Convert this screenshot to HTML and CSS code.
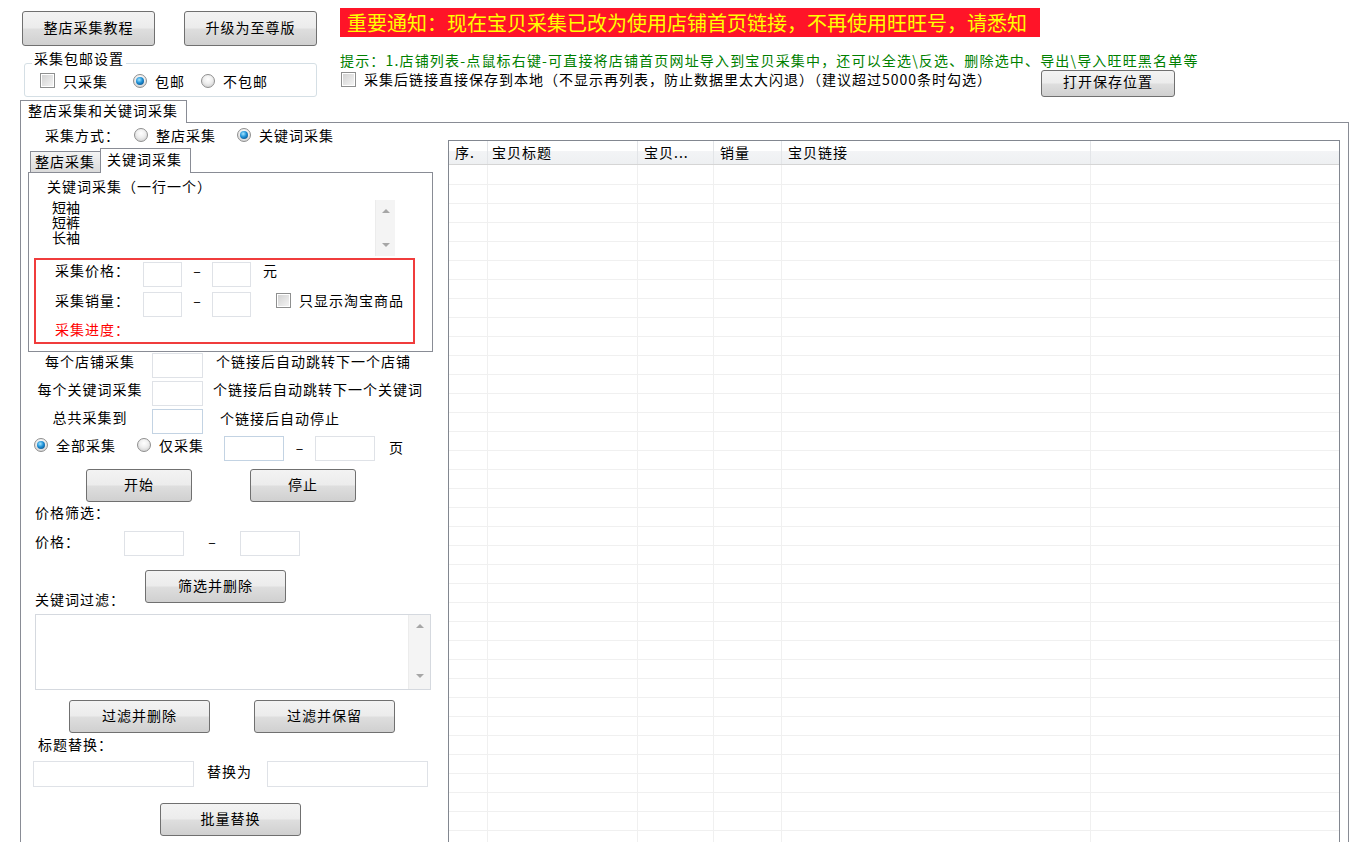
FILE: index.html
```html
<!DOCTYPE html>
<html lang="zh-CN">
<head>
  <meta charset="UTF-8" />
  <title>宝贝采集</title>
  <link rel="stylesheet" href="styles.css">
</head>
<body>
  <div class="top">
    <div class="top-left">
      <div class="btn-row">
        <button class="btn btn-top">整店采集教程</button>
        <button class="btn btn-top">升级为至尊版</button>
      </div>
      <div class="group">
        <span class="group-title">采集包邮设置</span>
        <label class="opt w93"><span class="check"></span>只采集</label>
        <label class="opt w68"><span class="radio on"></span>包邮</label>
        <label class="opt"><span class="radio"></span>不包邮</label>
      </div>
    </div>
    <div class="top-right">
      <div class="notice">重要通知：现在宝贝采集已改为使用店铺首页链接，不再使用旺旺号，请悉知</div>
      <div class="hint">提示：1.店铺列表-点鼠标右键-可直接将店铺首页网址导入到宝贝采集中，还可以全选\反选、删除选中、导出\导入旺旺黑名单等</div>
      <div class="save-row">
        <label class="opt save-opt"><span class="check"></span>采集后链接直接保存到本地（不显示再列表，防止数据里太大闪退）（建议超过5000条时勾选）</label>
        <button class="btn btn-save">打开保存位置</button>
      </div>
    </div>
  </div>

  <div class="tabs">
    <div class="tab-strip"><div class="tab">整店采集和关键词采集</div></div>
    <div class="tab-panel">
      <div class="left">
        <div class="mode-row">
          <span class="mode-label">采集方式：</span>
          <label class="opt w103"><span class="radio"></span>整店采集</label>
          <label class="opt"><span class="radio on"></span>关键词采集</label>
        </div>

        <div class="sub-strip">
          <div class="sub-tab">整店采集</div>
          <div class="sub-tab active">关键词采集</div>
        </div>
        <div class="sub-panel">
          <div class="kw-title">关键词采集（一行一个）</div>
          <div class="kw-box">
            <div class="kw-text">短袖<br>短裤<br>长袖</div>
            <div class="vscroll"><span class="arrow up"></span><span class="arrow down"></span></div>
          </div>
          <div class="redbox">
            <div class="rb-row">
              <span class="rb-label">采集价格：</span>
              <input class="field f39"><span class="dash">–</span><input class="field f39">
              <span class="unit">元</span>
            </div>
            <div class="rb-row">
              <span class="rb-label">采集销量：</span>
              <input class="field f39"><span class="dash">–</span><input class="field f39">
              <label class="opt taobao"><span class="check"></span>只显示淘宝商品</label>
            </div>
            <div class="progress">采集进度：</div>
          </div>
        </div>

        <div class="cnt-row first">
          <span class="cnt-label">每个店铺采集</span>
          <input class="field f51"><span class="cnt-text m13">个链接后自动跳转下一个店铺</span>
        </div>
        <div class="cnt-row">
          <span class="cnt-label">每个关键词采集</span>
          <input class="field f51"><span class="cnt-text m10">个链接后自动跳转下一个关键词</span>
        </div>
        <div class="cnt-row">
          <span class="cnt-label">总共采集到</span>
          <input class="field f51 blue"><span class="cnt-text m17">个链接后自动停止</span>
        </div>
        <div class="page-row">
          <label class="opt w103"><span class="radio on"></span>全部采集</label>
          <label class="opt w87"><span class="radio"></span>仅采集</label>
          <input class="field f60 blue"><span class="dash d31">–</span><input class="field f60">
          <span class="unit page">页</span>
        </div>
        <div class="run-row">
          <button class="btn btn-run">开始</button>
          <button class="btn btn-run">停止</button>
        </div>

        <div class="caption c35">价格筛选：</div>
        <div class="price-row">
          <span class="price-label">价格：</span>
          <input class="field f60"><span class="dash d56">–</span><input class="field f60">
        </div>
        <div class="filter-row">
          <span class="filter-label">关键词过滤：</span>
          <button class="btn btn-wide">筛选并删除</button>
        </div>
        <div class="memo">
          <div class="memo-text"></div>
          <div class="vscroll wide"><span class="arrow up"></span><span class="arrow down"></span></div>
        </div>
        <div class="keep-row">
          <button class="btn btn-wide">过滤并删除</button>
          <button class="btn btn-wide">过滤并保留</button>
        </div>

        <div class="caption c38">标题替换：</div>
        <div class="repl-row">
          <input class="field f161"><span class="repl-label">替换为</span><input class="field f161">
        </div>
        <button class="btn btn-wide btn-batch">批量替换</button>
      </div>

      <div class="listview">
        <div class="lv-head">
          <div class="col c1">序.</div>
          <div class="col c2">宝贝标题</div>
          <div class="col c3">宝贝...</div>
          <div class="col c4">销量</div>
          <div class="col c5">宝贝链接</div>
          <div class="col c6"></div>
        </div>
        <div class="lv-body">
          <div class="col c1"></div>
          <div class="col c2"></div>
          <div class="col c3"></div>
          <div class="col c4"></div>
          <div class="col c5"></div>
          <div class="col c6"></div>
        </div>
      </div>
    </div>
  </div>
</body>
</html>
```

FILE: styles.css
```css
* { box-sizing: border-box; }
body { margin: 0; width: 1357px; height: 842px; overflow: hidden; background: #fff; color: #000; font-family: "Noto Sans CJK SC", "Liberation Sans", sans-serif; font-size: 14px; letter-spacing: 1px; line-height: 16px; }

/* common controls */
.btn { display: block; padding: 0 0 4px; font: inherit; letter-spacing: inherit; color: #000; border: 1px solid #707070; border-radius: 3px; background: linear-gradient(#f3f3f3 0, #ececec 48%, #dedede 52%, #d0d0d0 100%); cursor: pointer; }
.field { display: block; height: 25px; padding: 0 3px; margin: 0; border: 1px solid #dfe2e7; background: #fff; font: inherit; outline: none; }
.field.blue { border-color: #c3d3e3; }
.f39 { width: 39px; }
.f51 { width: 51px; }
.f60 { width: 60px; }
.f161 { width: 161px; height: 26px; }
.opt { display: flex; align-items: center; gap: 8px; white-space: nowrap; }
.w68 { width: 68px; }
.w87 { width: 87px; }
.w93 { width: 93px; }
.w103 { width: 103px; }
.check { flex: none; width: 15px; height: 15px; border: 1px solid #8e8f8f; background: linear-gradient(135deg, #cfcfcf, #f6f6f6); box-shadow: inset 0 0 0 1px #fff; }
.radio { flex: none; width: 14px; height: 14px; border-radius: 50%; border: 1px solid #8f8f8f; background: radial-gradient(circle at 50% 35%, #fff 0, #eee 45%, #c6c6c6 100%); display: flex; align-items: center; justify-content: center; }
.radio.on::after { content: ""; width: 8px; height: 8px; border-radius: 50%; background: radial-gradient(circle at 40% 35%, #a4e6ff 0, #1c8fd6 45%, #0a3c6e 100%); }
.dash { width: 30px; text-align: center; letter-spacing: 0; }
.d31 { width: 31px; }
.d56 { width: 56px; }
.vscroll { flex: none; width: 20px; background: #f4f4f4; border-left: 1px solid #ececec; display: flex; flex-direction: column; justify-content: space-between; align-items: center; padding: 9px 0; }
.vscroll.wide { width: 22px; padding: 9px 0 11px; }
.arrow { width: 0; height: 0; border-left: 4px solid transparent; border-right: 4px solid transparent; }
.arrow.up { border-bottom: 4px solid #a6a6a6; }
.arrow.down { border-top: 4px solid #a6a6a6; }

/* top area */
.top { display: flex; height: 97px; }
.top-left { width: 340px; padding: 11px 0 0 22px; }
.btn-row { display: flex; gap: 29px; }
.btn-top { width: 133px; height: 35px; }
.group { position: relative; margin: 17px 0 0 2px; width: 293px; height: 34px; padding: 1px 0 0 15px; border: 1px solid #d5dfe5; border-radius: 3px; display: flex; align-items: center; }
.group-title { position: absolute; left: 7px; top: -14px; padding: 0 2px; background: #fff; }
.top-right { width: 835px; padding-top: 8px; }
.notice { width: 700px; height: 29px; padding-left: 7px; background: #ff1428; color: #ffff00; font-size: 20px; line-height: 29px; letter-spacing: 0; white-space: nowrap; }
.hint { margin-top: 15px; color: #008000; letter-spacing: 1.17px; white-space: nowrap; }
.save-row { display: flex; align-items: center; height: 26px; margin-top: 2px; padding-left: 1px; }
.save-opt { align-self: flex-start; line-height: 19px; }
.btn-save { margin-left: auto; width: 134px; height: 27px; }

/* outer tab */
.tabs { margin: 3px 0 0 20px; }
.tab-strip { display: flex; height: 22px; }
.tab { position: relative; z-index: 1; width: 167px; height: 23px; padding-left: 7px; border: 1px solid #898c95; border-bottom: 0; background: #fff; line-height: 18px; }
.tab-panel { display: flex; width: 1329px; height: 730px; border: 1px solid #898c95; }
.left { flex: none; width: 427px; }

.mode-row { display: flex; align-items: center; height: 18px; margin-top: 3px; padding-left: 24px; }
.mode-label { width: 89px; }

.sub-strip { display: flex; align-items: flex-end; height: 24px; margin: 4px 0 0 9px; }
.sub-tab { width: 71px; height: 21px; padding-left: 4px; border: 1px solid #898c95; border-bottom: 0; background: linear-gradient(#f4f4f4, #dadada); line-height: 19px; }
.sub-tab.active { position: relative; z-index: 1; width: 91px; height: 25px; margin: 0 0 -1px -1px; padding-left: 6px; background: #fff; line-height: 21px; }
.sub-panel { width: 405px; height: 180px; margin-left: 7px; padding: 5px 0 0 18px; border: 1px solid #898c95; }
.kw-box { display: flex; width: 348px; height: 56px; margin-top: 6px; }
.kw-text { flex: 1; padding: 0 0 0 5px; line-height: 15px; letter-spacing: 0; }
.redbox { width: 381px; height: 86px; margin: 2px 0 0 -13px; padding: 2px 0 0 19px; border: 2px solid #f03c3c; }
.rb-row { display: flex; align-items: center; height: 25px; }
.rb-row + .rb-row { margin-top: 5px; }
.rb-row > span, .rb-row > label { align-self: flex-start; line-height: 17px; }
.rb-label { width: 88px; }
.unit { margin-left: 12px; }
.taobao { margin-left: 25px; }
.progress { margin-top: 4px; color: #f00; }

.cnt-row { display: flex; align-items: center; height: 25px; margin-top: 3px; padding-left: 7px; }
.cnt-row.first { margin-top: 1px; }
.cnt-label, .cnt-text { align-self: flex-start; line-height: 17px; white-space: nowrap; }
.cnt-row .cnt-text.m17 { line-height: 19px; }
.cnt-label { width: 124px; text-align: center; }
.m10 { margin-left: 10px; }
.m13 { margin-left: 13px; }
.m17 { margin-left: 17px; }
.page-row { display: flex; align-items: center; height: 25px; margin-top: 2px; padding-left: 13px; }
.page-row > label { align-self: flex-start; line-height: 18px; }
.page-row > span { align-self: flex-start; line-height: 23px; }
.unit.page { margin-left: 14px; }
.run-row { display: flex; gap: 58px; margin-top: 8px; padding-left: 65px; }
.btn-run { width: 106px; height: 33px; }

.caption { margin-top: 2px; }
.c35 { padding-left: 14px; }
.c38 { margin-top: 3px; padding-left: 17px; }
.price-row { display: flex; align-items: center; height: 25px; margin-top: 11px; padding-left: 14px; }
.price-row > span { align-self: flex-start; line-height: 21px; }
.price-label { width: 89px; }
.filter-row { display: flex; align-items: flex-start; margin-top: 14px; padding-left: 14px; }
.filter-label { width: 110px; margin-top: 21px; }
.btn-wide { width: 141px; height: 33px; }
.memo { display: flex; width: 396px; height: 76px; margin: 7px 0 0 14px; border: 1px solid #d5d9df; }
.memo-text { flex: 1; }
.keep-row { display: flex; gap: 44px; margin-top: 10px; padding-left: 48px; }
.repl-row { display: flex; align-items: center; margin-top: 9px; padding-left: 12px; }
.repl-label { align-self: flex-start; width: 73px; padding-left: 13px; line-height: 21px; }
.btn-batch { margin: 16px 0 0 139px; }

/* list view */
.listview { flex: none; display: flex; flex-direction: column; width: 892px; height: 720px; margin-top: 17px; border: 1px solid #828790; }
.lv-head { display: flex; height: 24px; border-bottom: 1px solid #d5d5d5; background: linear-gradient(#fff 0, #fff 42%, #f3f4f6 43%, #eef0f2 100%); }
.lv-head .col { padding-left: 6px; border-right: 1px solid #e3e5e8; line-height: 22px; white-space: nowrap; overflow: hidden; }
.lv-head .c2 { padding-left: 4px; }
.lv-body { flex: 1; display: flex; background: repeating-linear-gradient(#fff 0, #fff 18px, #f0f0f0 18px, #f0f0f0 19px); background-position: 0 1px; }
.lv-body .col { border-right: 1px solid #f0f0f0; }
.c1 { width: 39px; }
.c2 { width: 150px; }
.c3 { width: 76px; }
.c4 { width: 68px; }
.c5 { width: 309px; }
.col.c6 { flex: 1; border-right: 0; }
```
